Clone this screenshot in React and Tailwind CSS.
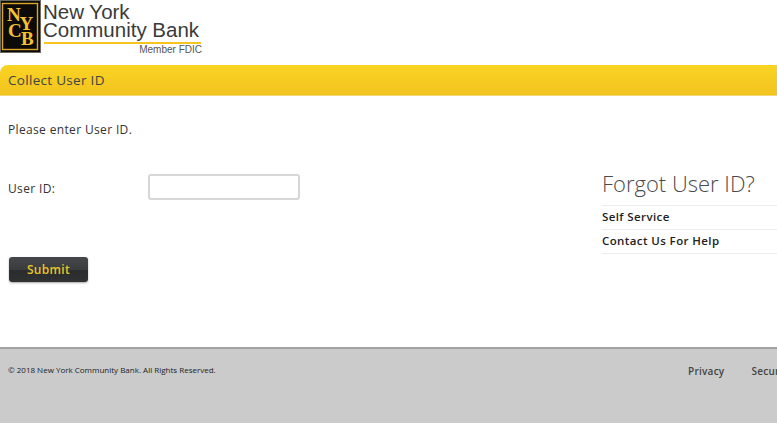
import React from 'react';

const font = { fontFamily: '"Open Sans", sans-serif' };

const Logo = () => (
    <svg width="41" height="53" viewBox="0 0 41 53" className="shrink-0">
        <rect x="0" y="0" width="41" height="53" fill="#6b6963" />
        <rect x="1" y="1" width="39" height="51" fill="#0d0b08" />
        <rect x="2.5" y="3.5" width="35" height="46" fill="none" stroke="#d9a62a" strokeWidth="1.4" />
        <g fontFamily='"Liberation Serif", serif' fontWeight="700" fill="#f3c22f" fontSize="19">
            <text x="7" y="21">N</text>
            <text x="19.5" y="30">Y</text>
            <text x="8" y="37">C</text>
            <text x="21" y="45">B</text>
        </g>
    </svg>
);

const App = () => {
    return (
        <div className="w-[777px] h-[423px] overflow-hidden bg-white flex flex-col text-[#333]" style={font}>
            <header className="h-[65px] flex items-start shrink-0">
                <Logo />
                <div className="ml-[2px] w-[160px]" style={{ fontFamily: '"Liberation Sans", sans-serif' }}>
                    <div className="text-[20.5px] leading-[18px] text-[#3a3a3a] mt-[3px] whitespace-nowrap">New York</div>
                    <div className="text-[20.5px] leading-[18px] text-[#3a3a3a] whitespace-nowrap">Community Bank</div>
                    <div className="h-[2px] bg-[#f6c521] mt-[3px] ml-[1px] w-[157px]" />
                    <div className="text-[10px] leading-[11px] text-[#555] text-right pr-[1px] whitespace-nowrap">Member FDIC</div>
                </div>
            </header>

            <div className="h-[31px] shrink-0 rounded-tl-[8px] bg-gradient-to-b from-[#f9d423] to-[#f3c31f] border-b border-[#f2d878] flex items-center pl-2">
                <h1 className="text-[13.5px] text-[#3f4448] tracking-[0.3px]">Collect User ID</h1>
            </div>

            <main className="h-[251px] shrink-0 flex justify-between pl-2">
                <div className="w-[400px]">
                    <p className="mt-[25px] text-[12px] leading-[18px] font-medium tracking-[0.35px] text-[#333]">Please enter User ID.</p>
                    <div className="mt-[35px] flex items-center h-[26px]">
                        <label className="w-[140px] pt-[3px] text-[12px] font-medium tracking-[0.35px] text-[#333]">User ID:</label>
                        <input className="w-[152px] h-[26px] bg-white border-2 border-[#d6d6d6] rounded-[3px] outline-none" />
                    </div>
                    <button className="mt-[57px] ml-[1px] block w-[79px] h-[25px] rounded-[3px] bg-[linear-gradient(#45484a_0%,#3a3c3e_50%,#2a2c2d_52%,#2f3132_100%)] shadow-[0_1px_2px_rgba(0,0,0,0.35)] text-[#e9c52a] text-[12px] font-semibold tracking-[0.3px]">
                        Submit
                    </button>
                </div>

                <aside className="w-[175px] shrink-0 pt-[70px]">
                    <h2 className="text-[22px] leading-[34px] font-light text-[#4a4a4a] whitespace-nowrap">Forgot User ID?</h2>
                    <ul className="border-t border-[#ececec] mt-[5px]">
                        <li className="h-[24px] pb-[2px] flex items-center border-b border-[#ececec] text-[11.5px] font-semibold tracking-[0.4px] text-[#222]">Self Service</li>
                        <li className="h-[24px] pb-[2px] flex items-center border-b border-[#ececec] text-[11.5px] font-semibold tracking-[0.4px] text-[#222]">Contact Us For Help</li>
                    </ul>
                </aside>
            </main>

            <footer className="flex-1 bg-[#cbcbcb] border-t-2 border-[#a3a3a3] flex items-start pl-2 pt-[14px] overflow-hidden">
                <span className="text-[8px] leading-[13px] text-[#222] whitespace-nowrap">© 2018 New York Community Bank. All Rights Reserved.</span>
                <nav className="ml-auto mt-[1px] flex gap-[27px] w-[89px] shrink-0 text-[10px] leading-[15px] font-semibold tracking-[0.25px] text-[#444] whitespace-nowrap">
                    <span>Privacy</span>
                    <span>Security</span>
                </nav>
            </footer>
        </div>
    );
};

export default App;
